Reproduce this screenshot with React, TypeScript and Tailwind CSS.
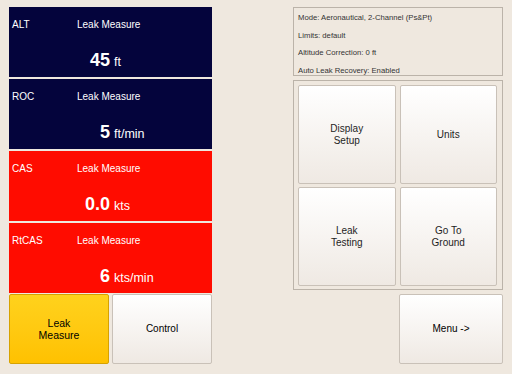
const FONT = { fontFamily: '"Liberation Sans", Arial, sans-serif' };

interface Reading {
  name: string;
  value: string;
  unit: string;
  tone: 'navy' | 'red';
}

const READINGS: Reading[] = [
  { name: 'ALT', value: '45', unit: 'ft', tone: 'navy' },
  { name: 'ROC', value: '5', unit: 'ft/min', tone: 'navy' },
  { name: 'CAS', value: '0.0', unit: 'kts', tone: 'red' },
  { name: 'RtCAS', value: '6', unit: 'kts/min', tone: 'red' },
];

function ReadingPanel({ r }: { r: Reading }) {
  return (
    <div
      className={`h-[70px] text-white ${r.tone === 'navy' ? 'bg-[#04043c]' : 'bg-[#ff0c00]'}`}
    >
      <div className="flex h-[35px] items-center text-[10px]">
        <span className="w-[68px] pl-[3px]">{r.name}</span>
        <span>Leak Measure</span>
      </div>
      <div className="mt-[9px] flex items-baseline">
        <span className="w-[101px] text-right text-[18px] leading-[18px] font-bold">{r.value}</span>
        <span className="ml-[4px] text-[12.5px]">{r.unit}</span>
      </div>
    </div>
  );
}

function SoftButton({ children, className = '' }: { children: React.ReactNode; className?: string }) {
  return (
    <div
      className={`flex items-center justify-center rounded-[2px] border border-[#c9c1b8] bg-gradient-to-b from-white to-[#efe9e3] text-center text-[10px] leading-[12px] text-[#1e1e1e] ${className}`}
    >
      {children}
    </div>
  );
}

export default function App() {
  return (
    <div className="flex h-[374px] w-[512px] justify-between bg-[#efe8df] px-[9px] pt-[7px]" style={FONT}>
      <div className="flex w-[203px] flex-col">
        <div className="flex flex-col gap-[2px]">
          {READINGS.map((r) => (
            <ReadingPanel key={r.name} r={r} />
          ))}
        </div>
        <div className="mt-[1px] flex gap-[3px]">
          <div className="flex h-[70px] w-[100px] items-center justify-center rounded-[2px] border border-[#d6a200] bg-gradient-to-b from-[#ffd21c] to-[#ffc100] text-center text-[10.5px] leading-[12px] text-black">
            Leak
            <br />
            Measure
          </div>
          <SoftButton className="h-[70px] w-[100px] text-[10.5px] text-black">Control</SoftButton>
        </div>
      </div>

      <div className="flex w-[210px] flex-col">
        <div className="h-[69px] border border-[#bbb3a9] pl-[4px] pt-[1px] text-[7.7px] leading-[17.5px] text-[#333]">
          <div>Mode: Aeronautical, 2-Channel (Ps&amp;Pt)</div>
          <div>Limits: default</div>
          <div>Altitude Correction: 0 ft</div>
          <div>Auto Leak Recovery: Enabled</div>
        </div>
        <div className="mt-[4px] grid h-[210px] grid-cols-2 grid-rows-2 gap-x-[4px] gap-y-[3px] border border-[#bbb3a9] pb-[3px] pl-[4px] pr-[5px] pt-[4px]">
          <SoftButton>
            Display
            <br />
            Setup
          </SoftButton>
          <SoftButton>Units</SoftButton>
          <SoftButton>
            Leak
            <br />
            Testing
          </SoftButton>
          <SoftButton>
            Go To
            <br />
            Ground
          </SoftButton>
        </div>
        <div className="mt-[4px] flex justify-end">
          <SoftButton className="h-[70px] w-[104px] text-[10.5px] text-black">Menu -&gt;</SoftButton>
        </div>
      </div>
    </div>
  );
}
